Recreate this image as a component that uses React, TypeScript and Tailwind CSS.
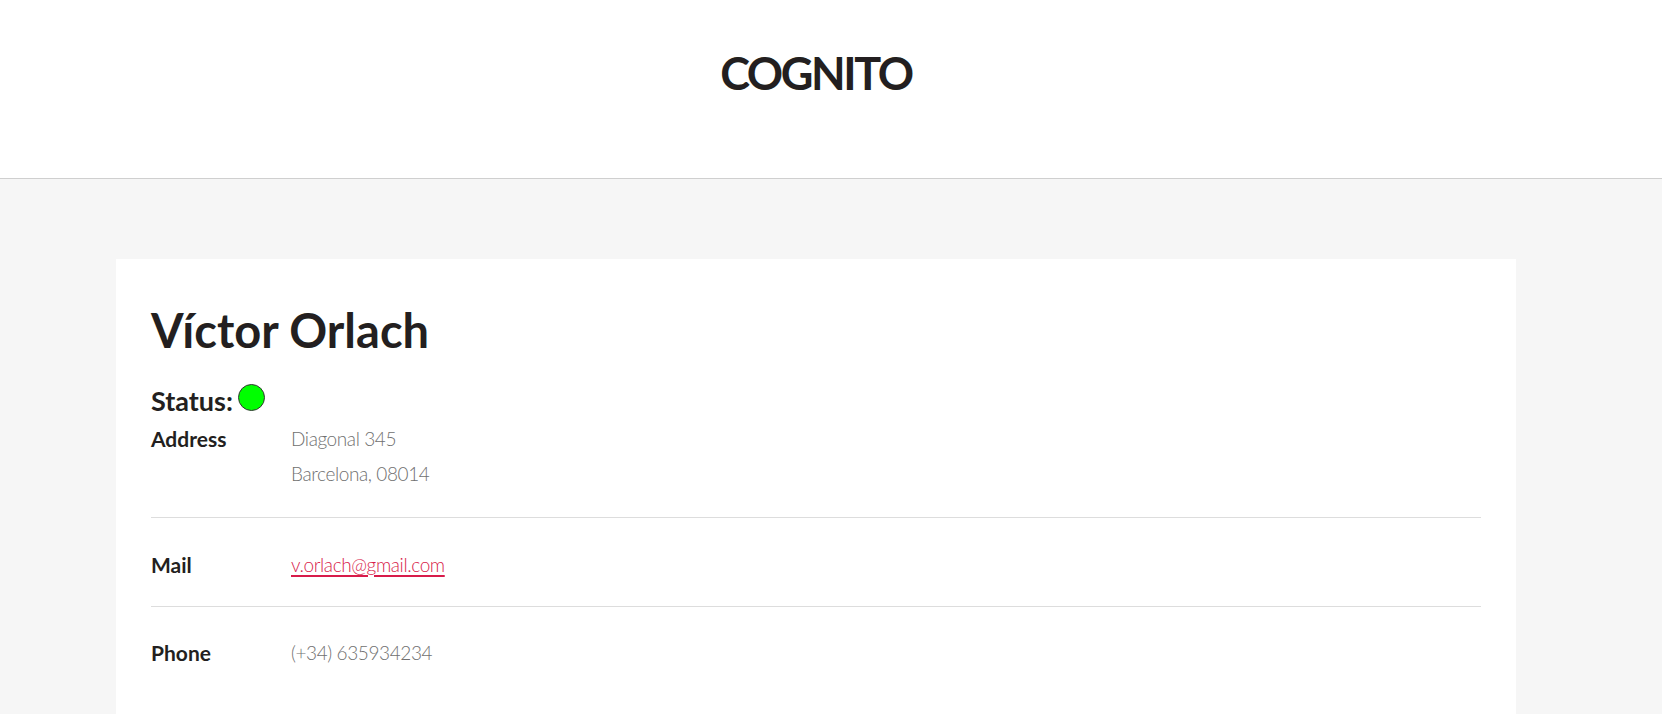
const rows = [
  { label: "Address", lines: ["Diagonal 345", "Barcelona, 08014"] },
];

export default function App() {
  return (
    <div className="min-h-screen bg-[#f6f6f6] font-[Lato,sans-serif] text-[#231f20]">
      <header className="h-[179px] bg-white border-b border-[#cfcfcf] flex justify-center pt-[45px] pr-[30px]">
        <h1 className="text-[45px] leading-[56px] font-bold tracking-[-2.4px]">COGNITO</h1>
      </header>

      <main className="pt-[80px]">
        <div className="ml-[116px] w-[1400px] bg-white px-[35px] pt-[43px] pb-[40px]">
          <h2 className="text-[47px] leading-[56px] font-bold">Víctor Orlach</h2>

          <div className="mt-[27px] flex items-start">
            <span className="text-[27px] leading-[31px] font-bold">Status:</span>
            <span className="ml-[5px] mt-[-1px] w-[27px] h-[27px] rounded-full bg-[#00ff00] border border-[#333]" />
          </div>

          {rows.map((r) => (
            <div key={r.label} className="mt-[5px] flex pb-[26px] border-b border-[#dddddd]">
              <div className="w-[140px] text-[21px] leading-[35px] font-bold">{r.label}</div>
              <div className="text-[19px] leading-[35px] font-light tracking-[-0.4px] text-[#707070]">
                {r.lines.map((l) => (
                  <div key={l}>{l}</div>
                ))}
              </div>
            </div>
          ))}

          <div className="flex pt-[29px] pb-[24px] border-b border-[#dddddd]">
            <div className="w-[140px] text-[21px] leading-[35px] font-bold">Mail</div>
            <a
              href="#"
              className="text-[19px] leading-[35px] font-light tracking-[-0.4px] text-[#d81b4a] underline decoration-[#d81b4a] decoration-2 underline-offset-[3px]"
            >
              v.orlach@gmail.com
            </a>
          </div>

          <div className="flex pt-[28px] pb-[24px]">
            <div className="w-[140px] text-[21px] leading-[35px] font-bold">Phone</div>
            <div className="text-[19px] leading-[35px] font-light tracking-[-0.4px] text-[#707070]">(+34) 635934234</div>
          </div>
        </div>
      </main>
    </div>
  );
}
